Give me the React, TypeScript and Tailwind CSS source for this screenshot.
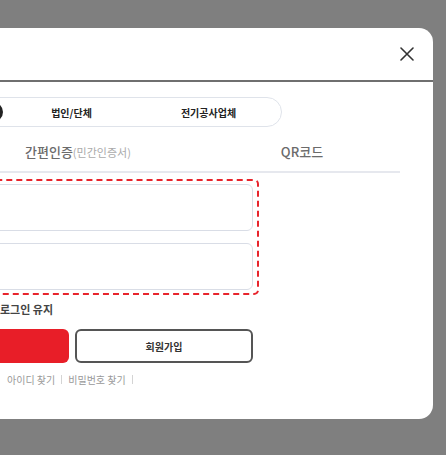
import React from "react";

const font = { fontFamily: '"Noto Sans CJK KR", "Noto Sans", sans-serif' };

function CloseIcon() {
    return (
        <svg width="14" height="14" viewBox="0 0 14 14" fill="none">
            <path d="M1 1L13 13M13 1L1 13" stroke="#333" strokeWidth="1.6" strokeLinecap="round" />
        </svg>
    );
}

export default function App() {
    return (
        <div className="h-[455px] w-[446px] overflow-hidden bg-[#7f7f7f] pt-[28px]" style={font}>
            <div className="ml-[-200px] h-[391px] w-[633px] rounded-[14px] bg-white overflow-hidden">
                {/* header */}
                <div className="flex h-[54px] items-center justify-end border-b-2 border-[#6f6f6f] pr-[18px]">
                    <button className="flex h-[16px] w-[16px] items-center justify-center">
                        <CloseIcon />
                    </button>
                </div>

                <div className="pl-[61px]">
                    {/* member type pill */}
                    <div className="mt-[15px] flex h-[30px] w-[421px] rounded-full border border-[#dfe3ea] p-[4px]">
                        <div className="flex w-[137px] items-center justify-center rounded-full bg-[#222] text-[10px] font-bold text-white">
                            개인
                        </div>
                        <div className="flex w-[137px] items-center justify-center text-[10px] font-bold text-[#222]">
                            법인/단체
                        </div>
                        <div className="flex w-[137px] items-center justify-center text-[10px] font-bold text-[#222]">
                            전기공사업체
                        </div>
                    </div>

                    {/* tabs */}
                    <div className="mt-[6px] flex h-[40px] w-[539px] border-b-2 border-[#e6e8ee]">
                        <div className="flex w-[343px] items-center pl-[164px]">
                            <span className="text-[13px] font-medium text-[#6b6b6b]">간편인증</span>
                            <span className="text-[11px] text-[#aaa]">(민간인증서)</span>
                        </div>
                        <div className="flex w-[196px] items-center justify-center text-[13px] font-medium text-[#6b6b6b]">
                            QR코드
                        </div>
                    </div>

                    {/* inputs */}
                    <div className="mt-[6px] flex w-[398px] flex-col gap-[12px] rounded-[5px] border-2 border-dashed border-[#e8242c] py-[3px] pl-[3px] pr-[4px]">
                        <input className="h-[47px] w-full rounded-[6px] border border-[#d9dde6] px-3 text-[12px] outline-none" />
                        <input type="password" className="h-[47px] w-full rounded-[6px] border border-[#d9dde6] px-3 text-[12px] outline-none" />
                    </div>

                    {/* keep login */}
                    <label className="mt-[6px] flex h-[16px] items-center pl-[121px]">
                        <span className="mr-[4px] h-[14px] w-[14px] rounded-[3px] border border-[#bbb]" />
                        <span className="text-[11px] font-bold text-[#444]">로그인 유지</span>
                    </label>

                    {/* buttons */}
                    <div className="ml-[30px] mt-[12px] flex gap-[6px]">
                        <button className="flex h-[34px] w-[178px] items-center justify-center rounded-[6px] bg-[#e81e28] text-[11px] font-bold text-white">
                            로그인
                        </button>
                        <button className="flex h-[34px] w-[178px] items-center justify-center rounded-[6px] border-2 border-[#555] bg-white text-[10px] font-bold text-[#333]">
                            회원가입
                        </button>
                    </div>

                    {/* links */}
                    <ul className="ml-[140px] mt-[8px] flex h-[16px] items-center text-[10px] text-[#999]">
                        <li className="flex items-center">
                            <span className="px-[6px]">아이디 찾기</span>
                            <span className="h-[9px] w-px bg-[#d4d4d4]" />
                        </li>
                        <li className="flex items-center">
                            <span className="px-[6px]">비밀번호 찾기</span>
                            <span className="h-[9px] w-px bg-[#d4d4d4]" />
                        </li>
                    </ul>
                </div>
            </div>
        </div>
    );
}
